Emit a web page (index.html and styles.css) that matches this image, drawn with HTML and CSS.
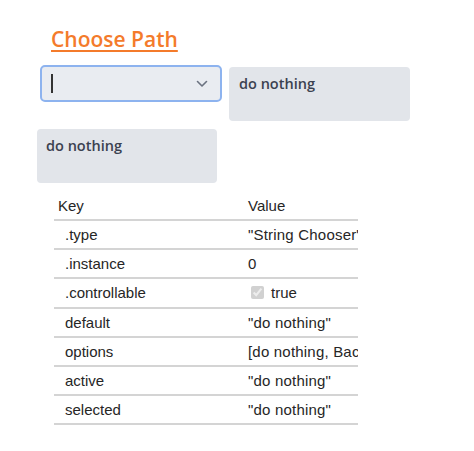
FILE: index.html
```html
<!DOCTYPE html>
<html>
<head>
<meta charset="utf-8">
<link rel="stylesheet" href="styles.css">
</head>
<body>
<div class="page">
  <h1 class="title">Choose Path</h1>
  <div class="widgets">
    <div class="row">
      <div class="select">
        <span class="caret"></span>
        <svg class="chev" width="12" height="8" viewBox="0 0 12 8"><path d="M1.5 1.5 L6 6 L10.5 1.5" fill="none" stroke="#6b7280" stroke-width="1.6" stroke-linecap="round" stroke-linejoin="round"/></svg>
      </div>
      <div class="box box-right">do nothing</div>
    </div>
    <div class="box box-left">do nothing</div>
  </div>
  <div class="table-wrap">
    <table class="props">
      <colgroup><col class="c-key"><col class="c-val"></colgroup>
      <thead>
        <tr><th class="k">Key</th><th class="v">Value</th></tr>
      </thead>
      <tbody>
        <tr><td class="k">.type</td><td class="v">"String Chooser"</td></tr>
        <tr><td class="k">.instance</td><td class="v">0</td></tr>
        <tr><td class="k">.controllable</td><td class="v"><label class="chk"><input type="checkbox" checked disabled> true</label></td></tr>
        <tr><td class="k">default</td><td class="v">"do nothing"</td></tr>
        <tr><td class="k">options</td><td class="v">[do nothing, Back up, Cross line]</td></tr>
        <tr><td class="k">active</td><td class="v">"do nothing"</td></tr>
        <tr><td class="k">selected</td><td class="v">"do nothing"</td></tr>
      </tbody>
    </table>
  </div>
</div>
</body>
</html>
```
FILE: styles.css
```css
html, body {
  margin: 0;
  padding: 0;
  background: #ffffff;
}
.page {
  padding: 24px 0 0 37px;
  font-family: "Open Sans", "Noto Sans", sans-serif;
}
.title {
  margin: 0 0 0 14px;
  font-size: 21px;
  font-weight: 600;
  line-height: 30px;
  color: #f47b2b;
  text-decoration: underline;
  text-decoration-thickness: 2px;
  text-underline-offset: 3px;
}
.widgets {
  margin-top: 11px;
}
.row {
  display: flex;
  align-items: flex-start;
  gap: 7px;
}
.select {
  margin-left: 3px;
  height: 33px;
  border: 2px solid #8db3ef;
  border-radius: 5px;
  background: #e9ecf1;
  display: flex;
  align-items: center;
  justify-content: space-between;
  padding: 0 12px 0 9px;
  box-sizing: content-box;
  width: 157px;
}
.caret {
  width: 1.5px;
  height: 19px;
  background: #333;
}
.chev {
  display: block;
}
.box {
  width: 171px;
  height: 44px;
  padding: 5px 0 5px 10px;
  background: #e2e5ea;
  border-radius: 4px;
  font-size: 14.5px;
  font-weight: 600;
  color: #3b4150;
  line-height: 24px;
}
.box-right {
  margin-top: 2px;
}
.box-left {
  margin-top: 8px;
  width: 171px;
  padding-left: 9px;
}
.table-wrap {
  margin: 9px 0 0 17px;
  width: 304px;
  overflow: hidden;
}
.props {
  border-collapse: collapse;
  table-layout: fixed;
  width: 400px;
  font-family: "Liberation Sans", Arial, sans-serif;
  font-size: 15px;
  color: #262626;
}
.c-key { width: 187px; }
.c-val { width: 213px; }
.props th, .props td {
  height: 27px;
  padding: 0;
  text-align: left;
  font-weight: 400;
  white-space: nowrap;
  overflow: hidden;
  border-bottom: 2px solid #d4d4d4;
  vertical-align: middle;
}
.props tbody td { height: 27.2px; }
.props th.k { padding-left: 4px; }
.props td.k { padding-left: 11px; }
.props th.v, .props td.v { padding-left: 7px; }
.props td.v { letter-spacing: 0.2px; }
.chk {
  display: inline-flex;
  align-items: center;
  gap: 7px;
  letter-spacing: 0;
}
.chk input {
  margin: 0 0 0 3px;
  width: 13px;
  height: 13px;
}
```
